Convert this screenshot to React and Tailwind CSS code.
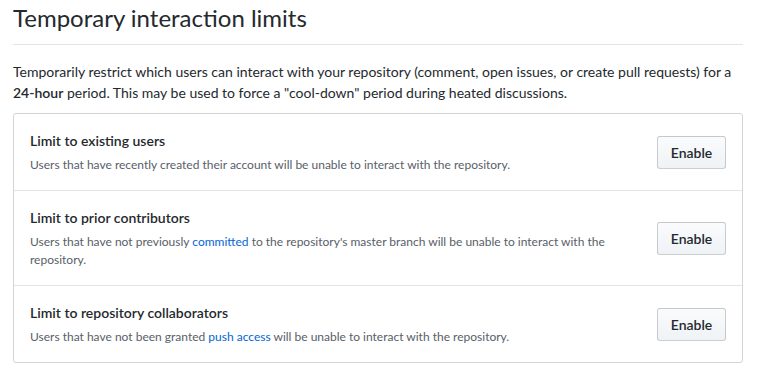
import React from 'react';

const rows = [
  {
    title: 'Limit to existing users',
    desc: <>Users that have recently created their account will be unable to interact with the repository.</>,
  },
  {
    title: 'Limit to prior contributors',
    desc: (
      <>
        Users that have not previously <a href="#" className="text-[#0366d6]">committed</a> to the repository's master branch will be unable to interact with the repository.
      </>
    ),
  },
  {
    title: 'Limit to repository collaborators',
    desc: (
      <>
        Users that have not been granted <a href="#" className="text-[#0366d6]">push access</a> will be unable to interact with the repository.
      </>
    ),
  },
];

const App = () => {
  return (
    <div className="bg-white min-h-screen pl-[13px] pr-[14px] text-[#24292e] font-['Lato','Liberation_Sans',sans-serif]">
      {/* Subhead */}
      <div className="pb-2 border-b border-[#e1e4e8]">
        <h2 className="text-[24px] leading-[36px] font-normal">Temporary interaction limits</h2>
      </div>

      <p className="mt-4 mb-[10px] text-[14px] leading-[21px]">
        Temporarily restrict which users can interact with your repository (comment, open issues, or create pull requests) for a{' '}
        <strong className="font-semibold">24-hour</strong> period. This may be used to force a "cool-down" period during heated discussions.
      </p>

      {/* Box */}
      <div className="border border-[#d1d5da] rounded-[3px]">
        {rows.map((row, i) => (
          <div key={i} className={`flex items-center p-4 ${i > 0 ? 'border-t border-[#e1e4e8]' : ''}`}>
            <div className="flex-1 pr-12">
              <div className="text-[14px] leading-[21px] font-semibold">{row.title}</div>
              <div className="mt-[5px] text-[12px] leading-[18px] text-[#586069]">{row.desc}</div>
            </div>
            <button className="h-[33px] w-[69px] text-[14px] font-semibold rounded-[3px] border border-[#1b1f2333] bg-gradient-to-b from-[#fafbfc] to-[#eff3f6]">
              Enable
            </button>
          </div>
        ))}
      </div>
    </div>
  );
};

export default App;
